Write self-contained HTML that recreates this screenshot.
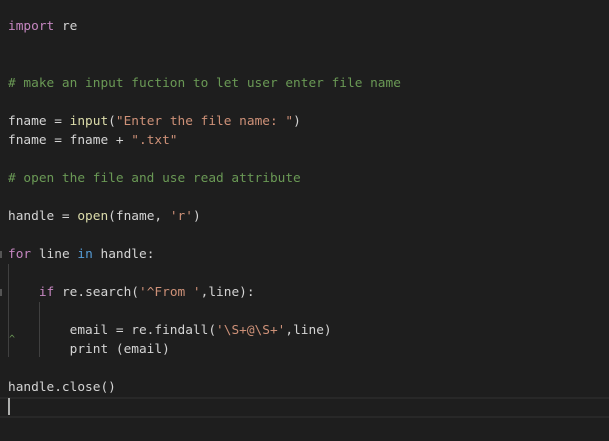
<!DOCTYPE html>
<html><head><style>
html,body{margin:0;padding:0;background:#1e1e1e;width:609px;height:441px;overflow:hidden}
.c{position:absolute;left:8px;top:17px;font-family:"DejaVu Sans Mono","Liberation Mono",monospace;font-size:12.8px;line-height:19px;color:#d4d4d4;white-space:pre}
.k{color:#c586c0}.b{color:#569cd6}.f{color:#dcdcaa}.s{color:#ce9178}.m{color:#6a9955}.v{color:#9cdcfe}
.g{position:absolute;width:1px;background:#404040}
.cur{position:absolute;left:0;top:397px;width:609px;height:17px;border-top:2px solid #282828;border-bottom:2px solid #282828}
</style></head><body>
<div class="cur"></div>
<div style="position:absolute;left:8px;top:398px;width:2px;height:17px;background:#aeafad"></div>
<div class="g" style="left:8px;top:264px;height:93px"></div>
<div class="g" style="left:39px;top:302px;height:55px"></div>
<div style="position:absolute;left:0;top:251px;width:2px;height:7px;background:#555"></div>
<div style="position:absolute;left:0;top:289px;width:2px;height:7px;background:#555"></div>
<div style="position:absolute;left:9px;top:334px;color:#6a9955;font:10px monospace">^</div>
<div class="c"><span class="k">import</span> re


<span class="m"># make an input fuction to let user enter file name</span>

fname = <span class="f">input</span>(<span class="s">"Enter the file name: "</span>)
fname = fname + <span class="s">".txt"</span>

<span class="m"># open the file and use read attribute</span>

handle = <span class="f">open</span>(fname, <span class="s">'r'</span>)

<span class="k">for</span> line <span class="b">in</span> handle:

    <span class="k">if</span> re.search(<span class="s">'^From '</span>,line):

        email = re.findall(<span class="s">'\S+@\S+'</span>,line)
        print (email)

handle.close()
</div>
</body></html>
